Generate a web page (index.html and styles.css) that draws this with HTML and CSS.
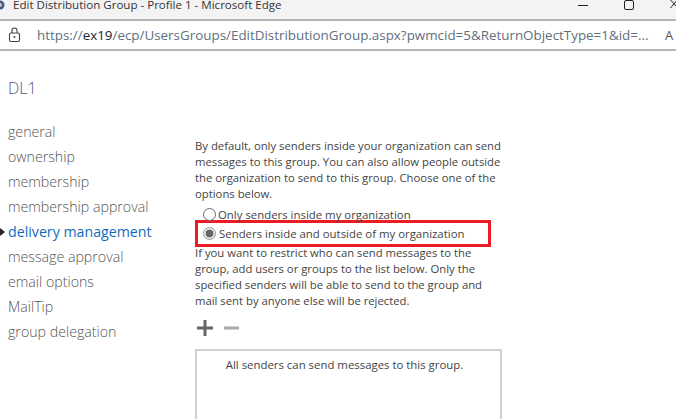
FILE: index.html
```html
<!DOCTYPE html>
<html lang="en">
<head>
<meta charset="utf-8">
<title>Edit Distribution Group</title>
<link rel="stylesheet" href="styles.css">
</head>
<body>
<header class="titlebar">
  <svg class="app-icon" width="10" height="10" viewBox="0 0 10 10"><circle cx="3" cy="5" r="4.5" fill="#3a5a9a"/><circle cx="3" cy="5" r="2" fill="#d8c890"/></svg>
  <span class="title">Edit Distribution Group - Profile 1 - Microsoft Edge</span>
  <div class="win-controls">
    <span class="win-min"></span>
    <span class="win-max"></span>
    <svg class="win-close" width="6" height="12" viewBox="0 0 6 12"><path d="M0.5 0 L8 8 M8 -1 L0.5 8" stroke="#222" fill="none"/></svg>
  </div>
</header>
<div class="addressbar">
  <svg class="lock" width="13" height="16" viewBox="0 0 13 16"><rect x="1.5" y="6" width="10" height="8.5" rx="1.5" fill="none" stroke="#444" stroke-width="1.1"/><path d="M4 6V3.5a2.5 2.5 0 0 1 5 0V6" fill="none" stroke="#444" stroke-width="1.1"/><circle cx="6.5" cy="10" r="1" fill="#444"/></svg>
  <span class="url"><span class="url-dim">https://</span><span class="url-host">ex19</span><span class="url-dim">/ecp/UsersGroups/EditDistributionGroup.aspx?pwmcid=5&amp;ReturnObjectType=1&amp;id=...</span></span>
  <span class="reader">A</span>
</div>
<main class="page">
  <h1 class="group-name">DL1</h1>
  <div class="columns">
    <nav class="sidenav">
      <a class="nav-item">general</a>
      <a class="nav-item">ownership</a>
      <a class="nav-item">membership</a>
      <a class="nav-item">membership approval</a>
      <a class="nav-item active">delivery management</a>
      <a class="nav-item">message approval</a>
      <a class="nav-item">email options</a>
      <a class="nav-item">MailTip</a>
      <a class="nav-item">group delegation</a>
    </nav>
    <section class="content">
      <p class="para">By default, only senders inside your organization can send messages to this group. You can also allow people outside the organization to send to this group. Choose one of the options below.</p>
      <label class="radio-row first"><span class="radio"></span>Only senders inside my organization</label>
      <label class="radio-row second"><span class="radio checked"></span>Senders inside and outside of my organization</label>
      <p class="para after">If you want to restrict who can send messages to the group, add users or groups to the list below. Only the specified senders will be able to send to the group and mail sent by anyone else will be rejected.</p>
      <div class="toolbar">
        <svg width="16" height="16" viewBox="0 0 16 16"><path d="M0 8H16M8 0V16" stroke="#666" stroke-width="3" fill="none"/></svg>
        <svg width="15" height="16" viewBox="0 0 15 16"><path d="M0 8H15" stroke="#a3abab" stroke-width="3" fill="none"/></svg>
      </div>
      <div class="listbox">All senders can send messages to this group.</div>
    </section>
  </div>
</main>
</body>
</html>
```
FILE: styles.css
```css
html, body {
  margin: 0;
  padding: 0;
  width: 676px;
  height: 419px;
  overflow: hidden;
  background: #fff;
  font-family: "Open Sans", "Noto Sans", sans-serif;
}
.titlebar {
  display: flex;
  align-items: flex-start;
  height: 19px;
  background: #f3f3f3;
}
.app-icon { margin-left: -3px; flex: none; }
.title {
  margin-left: 6px;
  font-size: 11.55px;
  line-height: 10px;
  color: #333;
  white-space: nowrap;
}
.win-controls {
  margin-left: auto;
  display: flex;
  align-items: flex-start;
  height: 19px;
}
.win-min { width: 10px; height: 1px; background: #222; margin-top: 5px; margin-right: 36px; }
.win-max { width: 8px; height: 8px; border: 1px solid #222; border-radius: 2px; margin-right: 36px; }
.win-close { flex: none; }
.addressbar {
  display: flex;
  align-items: center;
  height: 28px;
  width: 676px;
  border-top: 2px solid #b4b4b4;
  border-bottom: 2px solid #b4b4b4;
  background: #fff;
}
.lock { margin-left: 8px; flex: none; }
.url {
  margin-left: 16px;
  width: 612px;
  font-size: 13.4px;
  white-space: nowrap;
  flex: none;
}
.url-dim { color: #5f6f7d; }
.url-host { color: #1c2430; }
.reader { flex: none; width: 10px; margin-left: 16px; font-size: 13px; line-height: 16px; color: #555; }
.page { padding: 0 0 0 8px; }
.group-name {
  margin: 26px 0 0;
  font-weight: 300;
  font-size: 16px;
  line-height: 22px;
  color: #5c4a86;
}
.columns { display: flex; margin-top: 19px; }
.sidenav { width: 187px; flex: none; display: flex; flex-direction: column; margin-top: 1px; }
.nav-item {
  font-size: 14.2px;
  line-height: 25px;
  font-weight: 300;
  color: #555;
  white-space: nowrap;
  position: relative;
}
.nav-item.active { color: #0f6cbd; font-weight: 400; }
.nav-item.active::before {
  content: "";
  position: absolute;
  left: -8px;
  top: 9px;
  border-left: 5px solid #222;
  border-top: 4px solid transparent;
  border-bottom: 4px solid transparent;
}
.content { width: 310px; flex: none; padding-top: 20px; }
.para {
  margin: 0;
  font-size: 11.3px;
  line-height: 16px;
  color: #444;
}
.para.after { margin-top: -2px; }
.radio-row {
  display: flex;
  align-items: center;
  font-size: 11.4px;
  color: #444;
  white-space: nowrap;
}
.radio-row.first { margin-top: 4px; height: 16px; }
.radio-row.second {
  height: 27px;
  width: 296px;
  box-sizing: border-box;
  border: 3px solid #ec1c24;
  margin-top: -2px;
}
.radio {
  width: 13px;
  height: 13px;
  box-sizing: border-box;
  border: 1px solid #666;
  border-radius: 50%;
  margin-left: 8px;
  margin-right: 2px;
  flex: none;
  background: #fff;
}
.second .radio { margin-left: 5px; margin-right: 3px; border-color: #999; }
.radio.checked { background: radial-gradient(circle, #666 0 3.6px, #e8e8e8 4.2px); }
.toolbar { display: flex; gap: 11px; margin-top: 11px; align-items: center; margin-left: 2px; }
.listbox {
  margin-top: 13px;
  width: 295px;
  height: 80px;
  border: 2px solid #ccd2d6;
  text-align: center;
  font-size: 11.4px;
  line-height: 16px;
  padding-top: 6px;
  padding-right: 8px;
  color: #444;
}
```
